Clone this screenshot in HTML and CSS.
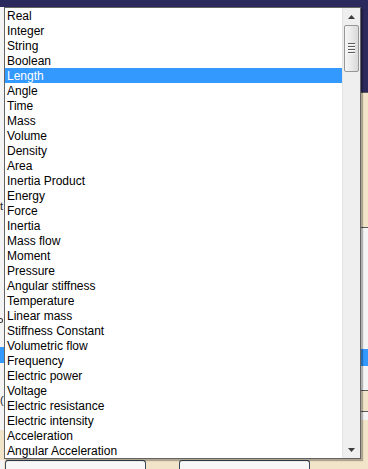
FILE: index.html
```html
<!DOCTYPE html>
<html lang="en">
<head>
  <meta charset="UTF-8">
  <title>Unit type list</title>
  <link rel="stylesheet" href="styles.css">
</head>
<body>
  <div class="window">
    <div class="titlebar"></div>
    <div class="client">
      <div class="edge-left">
        <div class="strip light" style="height: 192px"></div>
        <div class="strip mark">t</div>
        <div class="strip light" style="height: 98px"></div>
        <div class="strip curl"><span></span></div>
        <div class="strip light" style="height: 20px"></div>
        <div class="strip blue" style="height: 16px"></div>
        <div class="strip light" style="height: 30px"></div>
        <div class="strip mark">(</div>
        <div class="strip light" style="height: 22px"></div>
        <div class="strip beige" style="height: 30px"></div>
      </div>
      <div class="middle">
        <div class="buttons">
          <div class="btn btn-a"></div>
          <div class="btn btn-b"></div>
        </div>
      </div>
      <div class="edge-right">
        <div class="strip navy" style="height: 85px"></div>
        <div class="strip line"></div>
        <div class="strip beige" style="height: 134px"></div>
        <div class="strip line"></div>
        <div class="strip light" style="height: 121px"></div>
        <div class="strip blue" style="height: 17px"></div>
        <div class="strip light" style="height: 24px"></div>
        <div class="strip line"></div>
        <div class="strip beige" style="height: 20px"></div>
        <div class="strip line"></div>
        <div class="strip light" style="height: 8px"></div>
        <div class="strip beige" style="height: 40px"></div>
      </div>
    </div>
  </div>

  <!-- open dropdown list, drawn over the dialog -->
  <div class="dropdown">
    <ul class="options">
      <li>Real</li>
      <li>Integer</li>
      <li>String</li>
      <li>Boolean</li>
      <li class="selected">Length</li>
      <li>Angle</li>
      <li>Time</li>
      <li>Mass</li>
      <li>Volume</li>
      <li>Density</li>
      <li>Area</li>
      <li>Inertia Product</li>
      <li>Energy</li>
      <li>Force</li>
      <li>Inertia</li>
      <li>Mass flow</li>
      <li>Moment</li>
      <li>Pressure</li>
      <li>Angular stiffness</li>
      <li>Temperature</li>
      <li>Linear mass</li>
      <li>Stiffness Constant</li>
      <li>Volumetric flow</li>
      <li>Frequency</li>
      <li>Electric power</li>
      <li>Voltage</li>
      <li>Electric resistance</li>
      <li>Electric intensity</li>
      <li>Acceleration</li>
      <li>Angular Acceleration</li>
    </ul>
    <div class="scrollbar">
      <div class="arrow">
        <svg width="7" height="4" viewBox="0 0 7 4"><path d="M0 4 L3.5 0 L7 4 Z" fill="#3c3c3c"/></svg>
      </div>
      <div class="thumb">
        <span></span><span></span><span></span><span></span>
      </div>
      <div class="track"></div>
      <div class="arrow">
        <svg width="7" height="4" viewBox="0 0 7 4"><path d="M0 0 L7 0 L3.5 4 Z" fill="#3c3c3c"/></svg>
      </div>
    </div>
  </div>
</body>
</html>
```

FILE: styles.css
```css
body {
  margin: 0;
  padding: 0;
  width: 368px;
  height: 469px;
  overflow: hidden;
  font-family: 'Liberation Sans', Arial, sans-serif;
  background-color: #f1e4c8;
}
.window {
  display: flex;
  flex-direction: column;
  height: 469px;
}
.titlebar {
  height: 7px;
  background-color: #2c2a5c;
}
.client {
  flex: 1;
  display: flex;
}
.edge-left {
  width: 4px;
  display: flex;
  flex-direction: column;
  background-color: #f4f4f4;
}
.edge-right {
  width: 8px;
  display: flex;
  flex-direction: column;
  background-color: #f1e4c8;
}
.strip {
  flex: none;
}
.strip.navy { background-color: #2c2a5c; }
.strip.beige { background-color: #f1e4c8; }
.strip.light { background-color: #f4f4f4; }
.strip.blue { background-color: #3399ff; }
.strip.line { height: 1px; background-color: #5a5a5a; }
.strip.mark {
  height: 15px;
  line-height: 15px;
  font-size: 11px;
  color: #222;
  background-color: #f4f4f4;
}
.strip.curl {
  height: 15px;
  background-color: #f4f4f4;
  display: flex;
  align-items: center;
}
.strip.curl span {
  width: 3px;
  height: 5px;
  margin-top: 2px;
  border: 1px solid #333;
  border-left: none;
  border-radius: 0 3px 3px 0;
  box-sizing: border-box;
}
.middle {
  flex: 1;
  display: flex;
  flex-direction: column;
  justify-content: flex-end;
}
.buttons {
  display: flex;
  gap: 33px;
  padding-left: 1px;
  height: 9px;
}
.btn {
  height: 9px;
  background-color: #f7f7f7;
  border: 1px solid #3b4a5a;
  border-bottom: none;
  border-radius: 3px 3px 0 0;
  box-sizing: border-box;
}
.btn-a { width: 141px; }
.btn-b { width: 131px; }

.dropdown {
  position: absolute;
  left: 4px;
  top: 7px;
  width: 357px;
  height: 452px;
  box-sizing: border-box;
  border: 1px solid #646464;
  background-color: white;
  display: flex;
  box-shadow: 2px 2px 1px rgba(0, 0, 0, 0.28);
}
.options {
  flex: 1;
  list-style: none;
  margin: 0;
  padding: 0;
}
.options li {
  height: 14px;
  padding-top: 1px;
  line-height: 15px;
  padding-left: 2px;
  font-size: 12px;
  color: #000;
  white-space: nowrap;
}
.options li.selected {
  background-color: #3399ff;
  color: white;
}
.scrollbar {
  width: 17px;
  display: flex;
  flex-direction: column;
  background-color: #efefef;
  border-left: 1px solid #e4e4e4;
}
.arrow {
  height: 17px;
  display: flex;
  align-items: center;
  justify-content: center;
}
.thumb {
  height: 47px;
  margin: 0 1px;
  box-sizing: border-box;
  border: 1px solid #979797;
  border-radius: 2px;
  background: linear-gradient(to right, #f6f6f6, #e9e9e9 50%, #d9d9d9);
  display: flex;
  flex-direction: column;
  align-items: center;
  justify-content: center;
  gap: 1px;
}
.thumb span {
  width: 7px;
  height: 1px;
  background-color: #5c5c5c;
  border-bottom: 1px solid #fafafa;
}
.track {
  flex: 1;
}
```
